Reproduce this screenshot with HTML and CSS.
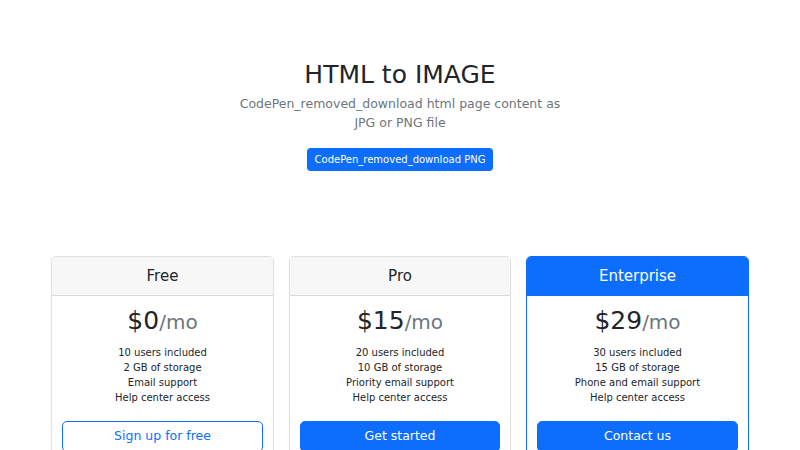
FILE: index.html
```html
<!DOCTYPE html>
<html lang="en">
<head>
<meta charset="utf-8">
<title>HTML to IMAGE</title>
<link rel="stylesheet" href="styles.css">
</head>
<body>
<main class="container">
  <header class="intro">
    <h1 class="title">HTML to IMAGE</h1>
    <p class="lead">CodePen_removed_download html page content as JPG or PNG file</p>
    <button class="btn btn-primary btn-sm">CodePen_removed_download PNG</button>
  </header>
  <section class="plans">
    <div class="card">
      <div class="card-header"><h4>Free</h4></div>
      <div class="card-body">
        <h1 class="price">$0<small>/mo</small></h1>
        <ul class="features">
          <li>10 users included</li>
          <li>2 GB of storage</li>
          <li>Email support</li>
          <li>Help center access</li>
        </ul>
        <button class="btn btn-lg btn-outline">Sign up for free</button>
      </div>
    </div>
    <div class="card">
      <div class="card-header"><h4>Pro</h4></div>
      <div class="card-body">
        <h1 class="price">$15<small>/mo</small></h1>
        <ul class="features">
          <li>20 users included</li>
          <li>10 GB of storage</li>
          <li>Priority email support</li>
          <li>Help center access</li>
        </ul>
        <button class="btn btn-lg btn-primary">Get started</button>
      </div>
    </div>
    <div class="card card-primary">
      <div class="card-header"><h4>Enterprise</h4></div>
      <div class="card-body">
        <h1 class="price">$29<small>/mo</small></h1>
        <ul class="features">
          <li>30 users included</li>
          <li>15 GB of storage</li>
          <li>Phone and email support</li>
          <li>Help center access</li>
        </ul>
        <button class="btn btn-lg btn-primary">Contact us</button>
      </div>
    </div>
  </section>
</main>
</body>
</html>
```
FILE: styles.css
```css
html, body {
  margin: 0;
  padding: 0;
  background: #fff;
}
body {
  font-family: "DejaVu Sans", sans-serif;
  color: #212529;
  font-size: 10px;
  line-height: 1.5;
  overflow: hidden;
}
.container {
  width: 697.5px;
  margin: 0 auto;
}
.intro {
  text-align: center;
  padding-top: 60px;
}
.title {
  margin: 0 0 5px;
  font-size: 25px;
  line-height: 30px;
  font-weight: 400;
}
.lead {
  margin: 0 auto 15px;
  max-width: 335px;
  font-size: 12.5px;
  line-height: 18.75px;
  color: #6c757d;
}
.btn {
  font-family: inherit;
  cursor: pointer;
  display: inline-block;
  box-sizing: border-box;
}
.btn-sm {
  font-size: 10px;
  line-height: 15px;
  padding: 4px 8px;
  border: 0;
  border-radius: 3.75px;
}
.btn-primary {
  background: #0d6efd;
  color: #fff;
  border: 1px solid #0d6efd;
}
.btn-sm.btn-primary {
  border: 0;
}
.btn-outline {
  background: #fff;
  color: #0d6efd;
  border: 1px solid #0d6efd;
}
.btn-lg {
  width: 100%;
  font-size: 12.5px;
  line-height: 18.75px;
  padding: 5px 10px;
  border-radius: 5px;
}
.plans {
  margin-top: 85px;
  display: grid;
  grid-template-columns: repeat(3, 1fr);
  gap: 15px;
}
.card {
  border: 1px solid rgba(0, 0, 0, 0.12);
  border-radius: 5px;
  box-shadow: 0 1px 2px rgba(0, 0, 0, 0.05);
  overflow: hidden;
  text-align: center;
  background: #fff;
}
.card-header {
  background: #f7f7f7;
  border-bottom: 1px solid rgba(0, 0, 0, 0.12);
  padding: 10px;
}
.card-header h4 {
  margin: 0;
  font-size: 15px;
  line-height: 18px;
  font-weight: 400;
}
.card-primary {
  border-color: #0d6efd;
}
.card-primary .card-header {
  background: #0d6efd;
  color: #fff;
  border-bottom-color: #0d6efd;
}
.card-body {
  padding: 10px;
}
.price {
  margin: 0;
  font-size: 25px;
  line-height: 30px;
  font-weight: 400;
}
.price small {
  font-size: 80%;
  color: #6c757d;
  font-weight: 400;
}
.features {
  list-style: none;
  padding: 0;
  margin: 8.5px 0 16px;
}
```
